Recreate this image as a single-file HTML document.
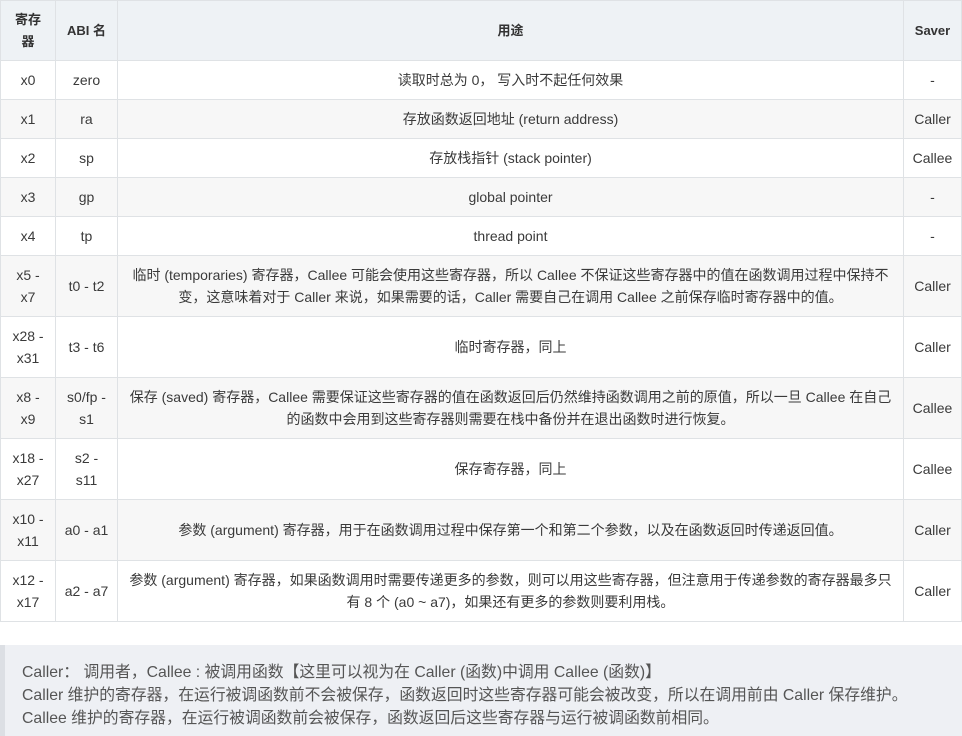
<!DOCTYPE html>
<html><head><meta charset="utf-8"><style>
body{margin:0;background:#fff;font-family:"Liberation Sans","Noto Sans CJK SC",sans-serif;color:#3a3a3a;font-size:14px;}
table{position:absolute;left:0;top:0;border-collapse:collapse;width:961px;table-layout:fixed}
td,th{border:1px solid #dfe2e5;text-align:center;padding:0 8px;line-height:22px;}
th{background:#eef2f5;font-weight:bold;height:59px;color:#333;font-size:13px}
tr:nth-child(odd) td{background:#f7f7f7}
td{height:38px}
tr.t td{height:60px}
.q{position:absolute;left:0;top:645px;width:962px;height:91px;background:#eef0f4;border-left:5px solid #dcdfe4;box-sizing:border-box;padding:16px 0 0 17px;font-size:15.8px;line-height:23px;color:#555;white-space:nowrap}
</style></head><body>
<table>
<colgroup><col style="width:55px"><col style="width:62px"><col style="width:786px"><col style="width:58px"></colgroup>
<tr><th>寄存<br>器</th><th>ABI 名</th><th>用途</th><th>Saver</th></tr>
<tr><td>x0</td><td>zero</td><td>读取时总为 0， 写入时不起任何效果</td><td>-</td></tr>
<tr><td>x1</td><td>ra</td><td>存放函数返回地址 (return address)</td><td>Caller</td></tr>
<tr><td>x2</td><td>sp</td><td>存放栈指针 (stack pointer)</td><td>Callee</td></tr>
<tr><td>x3</td><td>gp</td><td>global pointer</td><td>-</td></tr>
<tr><td>x4</td><td>tp</td><td>thread point</td><td>-</td></tr>
<tr class="t"><td>x5 -<br>x7</td><td>t0 - t2</td><td>临时 (temporaries) 寄存器，Callee 可能会使用这些寄存器，所以 Callee 不保证这些寄存器中的值在函数调用过程中保持不变，这意味着对于 Caller 来说，如果需要的话，Caller 需要自己在调用 Callee 之前保存临时寄存器中的值。</td><td>Caller</td></tr>
<tr class="t"><td>x28 -<br>x31</td><td>t3 - t6</td><td>临时寄存器，同上</td><td>Caller</td></tr>
<tr class="t"><td>x8 -<br>x9</td><td>s0/fp -<br>s1</td><td>保存 (saved) 寄存器，Callee 需要保证这些寄存器的值在函数返回后仍然维持函数调用之前的原值，所以一旦 Callee 在自己的函数中会用到这些寄存器则需要在栈中备份并在退出函数时进行恢复。</td><td>Callee</td></tr>
<tr class="t"><td>x18 -<br>x27</td><td>s2 -<br>s11</td><td>保存寄存器，同上</td><td>Callee</td></tr>
<tr class="t"><td>x10 -<br>x11</td><td>a0 - a1</td><td>参数 (argument) 寄存器，用于在函数调用过程中保存第一个和第二个参数，以及在函数返回时传递返回值。</td><td>Caller</td></tr>
<tr class="t"><td>x12 -<br>x17</td><td>a2 - a7</td><td>参数 (argument) 寄存器，如果函数调用时需要传递更多的参数，则可以用这些寄存器，但注意用于传递参数的寄存器最多只有 8 个 (a0 ~ a7)，如果还有更多的参数则要利用栈。</td><td>Caller</td></tr>
</table>
<div class="q">Caller： 调用者，Callee : 被调用函数【这里可以视为在 Caller (函数)中调用 Callee (函数)】<br>Caller 维护的寄存器，在运行被调函数前不会被保存，函数返回时这些寄存器可能会被改变，所以在调用前由 Caller 保存维护。<br>Callee 维护的寄存器，在运行被调函数前会被保存，函数返回后这些寄存器与运行被调函数前相同。</div>
</body></html>
